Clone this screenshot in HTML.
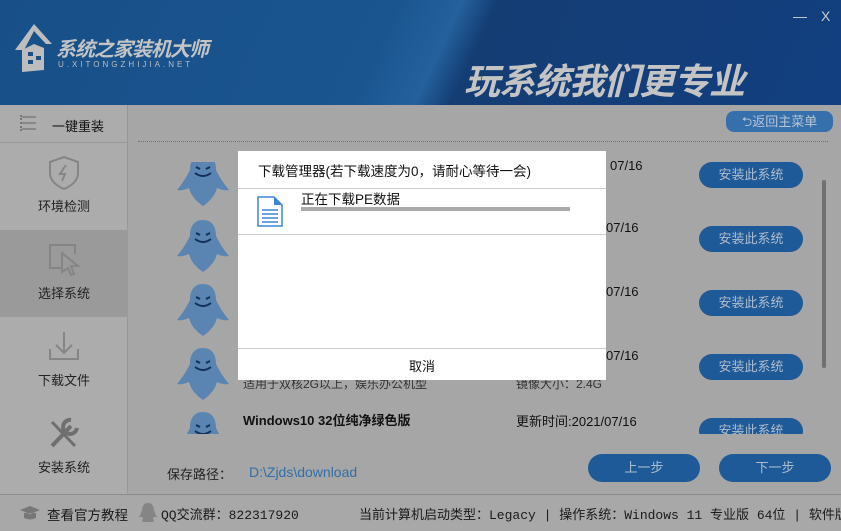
<!DOCTYPE html><html><head><meta charset="utf-8"><style>
*{margin:0;padding:0;box-sizing:border-box}
body{width:841px;height:531px;overflow:hidden;background:#a6a6a6;font-family:"Liberation Sans","Noto Sans CJK SC",sans-serif;position:relative;color:#111}
.hdr{position:absolute;left:0;top:0;width:841px;height:105px;background:linear-gradient(115deg,#184f88 0%,#1a5590 45%,#24619c 52%,#143d74 56%,#123f80 100%)}
.a{position:absolute}
.side{position:absolute;left:0;top:105px;width:128px;height:390px;background:#acacac;border-right:1px solid #979797}
.item{position:absolute;left:0;width:128px;height:87px;text-align:center;font-size:13px;color:#222}
.btn{position:absolute;left:699px;width:104px;height:26px;border-radius:13px;background:#1f5a98;color:#aebccd;font-size:13px;text-align:center;line-height:26px}
.ghost{position:absolute;left:177px;width:52px;height:56px}
.foot{position:absolute;left:0;top:494px;width:841px;height:37px;background:#a8a8a8;border-top:1px solid #8c8c8c;font-size:13.5px;color:#1a1a1a}
</style></head><body>
<div class="hdr"></div>
<svg class="a" style="left:12px;top:22px" width="45" height="52" viewBox="0 0 45 52"><path d="M3 28 L22 2 L40 22 L34 22 L22 9 L12 28Z M10 28 L22 22 L32 26 L32 48 L10 50Z" fill="#bdbdbd"/><rect x="16" y="30" width="5" height="4" fill="#184f88"/><rect x="16" y="38" width="5" height="4" fill="#184f88"/><rect x="24" y="34" width="5" height="4" fill="#184f88"/></svg>
<div class="a" style="left:56px;top:33px;font-size:20px;font-weight:bold;color:#c4c4c4;letter-spacing:-1px;font-style:italic">系统之家装机大师</div>
<div class="a" style="left:58px;top:60px;font-size:8px;color:#bdbdbd;letter-spacing:3px">U.XITONGZHIJIA.NET</div>
<div class="a" style="left:464px;top:53px;font-size:36px;font-weight:bold;color:#c4c4c4;font-style:italic;letter-spacing:-1px">玩系统我们更专业</div>
<div class="a" style="left:793px;top:8px;color:#ccc;font-size:14px">—</div>
<div class="a" style="left:821px;top:8px;color:#ccc;font-size:14px">X</div>
<div class="side">
<div class="a" style="left:0;top:0;width:128px;height:38px;border-bottom:1px solid #979797"><div class="a" style="left:20px;top:10px;width:16px;height:16px;border-left:2px dotted #777"></div><div class="a" style="left:22px;top:11px;width:14px;height:14px;background:repeating-linear-gradient(#888 0 2px,transparent 2px 6px)"></div><div class="a" style="left:52px;top:11px;font-size:13px">一键重装</div></div>
<div class="item" style="top:38px"><svg style="margin-top:12px" width="34" height="36" viewBox="0 0 34 36"><path d="M17 2 L31 7 V18 C31 26 24 31 17 34 C10 31 3 26 3 18 V7Z" fill="none" stroke="#858585" stroke-width="2"/><path d="M19 10 L13 19 H18 L15 26" fill="none" stroke="#858585" stroke-width="2"/></svg><div style="margin-top:2px">环境检测</div></div>
<div class="item" style="top:125px;background:#9a9a9a"><svg style="margin-top:12px" width="34" height="36" viewBox="0 0 34 36"><path d="M16 26 H3 V3 H28 V12" fill="none" stroke="#858585" stroke-width="2"/><path d="M15 11 L31 24 L24 24 L27 32 L24 33 L21 26 L15 30Z" fill="none" stroke="#858585" stroke-width="2"/></svg><div style="margin-top:2px">选择系统</div></div>
<div class="item" style="top:212px"><svg style="margin-top:12px" width="34" height="36" viewBox="0 0 34 36"><path d="M17 3 V24 M9 16 L17 24 L25 16 M3 20 V30 H31 V20" fill="none" stroke="#858585" stroke-width="2"/></svg><div style="margin-top:2px">下载文件</div></div>
<div class="item" style="top:299px"><svg style="margin-top:12px" width="34" height="36" viewBox="0 0 34 36"><path d="M5 30 L24 10 M24 4 A7 7 0 1 0 30 12" fill="none" stroke="#6f6f6f" stroke-width="4"/><path d="M5 6 L28 30" stroke="#6f6f6f" stroke-width="3"/></svg><div style="margin-top:2px">安装系统</div></div>
</div>
<div class="a" style="left:726px;top:111px;width:107px;height:21px;border-radius:8px;background:#3570ac;color:#b9c5d4;font-size:13px;text-align:center;line-height:21px">⮌返回主菜单</div>
<div class="a" style="left:138px;top:141px;width:690px;border-top:1px dotted #707070"></div>
<svg width="0" height="0" style="position:absolute"><defs><g id="g"><path d="M26 4 C36 4 39 12 39 20 C43 28 47 34 52 40 C47 41 43 39 40 38 C38 46 32 52 26 56 C20 52 14 46 12 38 C9 39 5 41 0 40 C5 34 9 28 13 20 C13 12 16 4 26 4Z" fill="#5a84b2"/><path d="M19 17 L23 19 M33 17 L29 19 M18 23 Q26 29 34 23" stroke="#142f58" stroke-width="2" fill="none"/></g></defs></svg>
<svg class="ghost" style="top:162px;height:44px" viewBox="0 12 52 44"><use href="#g"/></svg>
<svg class="ghost" style="top:216px" viewBox="0 0 52 56"><use href="#g"/></svg>
<svg class="ghost" style="top:280px" viewBox="0 0 52 56"><use href="#g"/></svg>
<svg class="ghost" style="top:344px" viewBox="0 0 52 56"><use href="#g"/></svg>
<svg class="ghost" style="top:408px;height:26px" viewBox="0 0 52 26"><use href="#g"/></svg>
<div class="a" style="left:610px;top:158px;font-size:13px">07/16</div>
<div class="a" style="left:606px;top:220px;font-size:13px">07/16</div>
<div class="a" style="left:606px;top:284px;font-size:13px">07/16</div>
<div class="a" style="left:606px;top:348px;font-size:13px">07/16</div>
<div class="a" style="left:243px;top:375px;font-size:12px;color:#333">适用于双核2G以上，娱乐办公机型</div>
<div class="a" style="left:516px;top:375px;font-size:12px;color:#333">镜像大小：2.4G</div>
<div class="a" style="left:243px;top:410px;font-size:13px;font-weight:bold">Windows10 32位纯净绿色版</div>
<div class="a" style="left:516px;top:411px;font-size:13px">更新时间:2021/07/16</div>
<div class="btn" style="top:162px">安装此系统</div>
<div class="btn" style="top:226px">安装此系统</div>
<div class="btn" style="top:290px">安装此系统</div>
<div class="btn" style="top:354px">安装此系统</div>
<div class="a" style="left:699px;top:418px;width:104px;height:16px;overflow:hidden"><div class="btn" style="left:0;top:0">安装此系统</div></div>
<div class="a" style="left:822px;top:180px;width:4px;height:188px;background:#707070;border-radius:2px"></div>
<div class="a" style="left:167px;top:464px;font-size:13px;color:#222">保存路径：</div>
<div class="a" style="left:249px;top:464px;font-size:14px;color:#336ea8">D:\Zjds\download</div>
<div class="btn" style="left:588px;top:454px;width:112px;height:28px;line-height:28px;border-radius:14px">上一步</div>
<div class="btn" style="left:719px;top:454px;width:112px;height:28px;line-height:28px;border-radius:14px">下一步</div>
<div class="a" style="left:238px;top:151px;width:368px;height:229px;background:#fff">
<div class="a" style="left:20px;top:9px;font-size:13.5px">下载管理器(若下载速度为0，请耐心等待一会)</div>
<div class="a" style="left:0;top:37px;width:368px;border-top:1px solid #ccc"></div>
<svg class="a" style="left:19px;top:45px" width="26" height="31" viewBox="0 0 26 31"><path d="M1 1 H17 L25 9 V30 H1Z" fill="#fff" stroke="#3a86d6" stroke-width="1.5"/><path d="M17 1 V9 H25" fill="#3a86d6"/><path d="M5 14 H21 M5 18 H21 M5 22 H21 M5 26 H21" stroke="#3a86d6" stroke-width="1.5"/></svg>
<div class="a" style="left:63px;top:37px;font-size:13.5px">正在下载PE数据</div>
<div class="a" style="left:63px;top:56px;width:269px;height:4px;background:#aaa"></div>
<div class="a" style="left:0;top:83px;width:368px;border-top:1px solid #ccc"></div>
<div class="a" style="left:0;top:197px;width:368px;border-top:1px solid #ccc"></div>
<div class="a" style="left:0;top:205px;width:368px;text-align:center;font-size:13px">取消</div>
</div>
<div class="foot">
<svg class="a" style="left:19px;top:10px" width="22" height="16" viewBox="0 0 22 16"><path d="M11 1 L21 5 L11 9 L1 5Z M5 8 V13 Q11 16 17 13 V8" fill="#777"/></svg>
<div class="a" style="left:47px;top:9px">查看官方教程</div>
<svg class="a" style="left:138px;top:7px" width="20" height="22" viewBox="0 0 20 22"><path d="M10 1 C15 1 16 6 16 9 L19 15 L15 15 L16 20 L4 20 L5 15 L1 15 L4 9 C4 6 5 1 10 1Z" fill="#858585"/></svg>
<div class="a" style="left:161px;top:9px;font-family:'Liberation Mono','Noto Sans CJK SC',monospace;font-size:13px">QQ交流群：822317920</div>
<div class="a" style="left:359px;top:9px;font-family:'Liberation Mono','Noto Sans CJK SC',monospace;font-size:13px;white-space:nowrap">当前计算机启动类型：Legacy | 操作系统：Windows 11 专业版 64位 | 软件版本</div>
</div>
</body></html>
